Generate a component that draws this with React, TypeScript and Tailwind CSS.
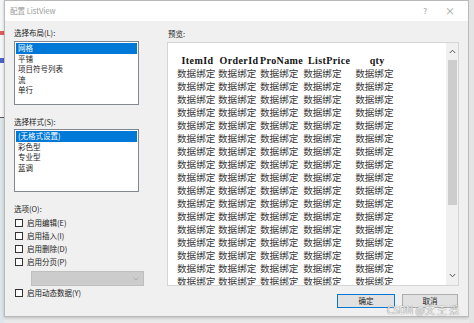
import React from 'react';

const ui = { fontFamily: '"Noto Sans CJK SC", "Liberation Sans", sans-serif' };
const head = { fontFamily: '"Liberation Serif", "Noto Sans CJK SC", serif' };

const layouts = ['网格', '平铺', '项目符号列表', '流', '单行'];
const styles = ['(无格式设置)', '彩色型', '专业型', '蓝调'];
const options = ['启用编辑(E)', '启用插入(I)', '启用删除(D)', '启用分页(P)'];
const columns = ['ItemId', 'OrderId', 'ProName', 'ListPrice', 'qty'];
const colWidths = ['w-[41px]', 'w-[42px]', 'w-[42px]', 'w-[52px]', 'w-[44px]'];

function ListBox({ items, height }: { items: string[]; height: string }) {
  return (
    <div className={`w-[125px] ${height} bg-white border border-[#828790] p-px`}>
      {items.map((item, i) => (
        <div
          key={item}
          className={`h-[10.5px] leading-[10.5px] pl-[2px] text-[7.5px] ${
            i === 0 ? 'bg-[#0078d7] text-white' : 'text-[#1a1a1a]'
          }`}
        >
          {item}
        </div>
      ))}
    </div>
  );
}

function CheckRow({ label }: { label: string }) {
  return (
    <div className="h-[13px] flex items-center gap-[4px] pl-px">
      <div className="w-[8px] h-[8px] border border-[#333] bg-white" />
      <span className="text-[7.5px] text-[#222]">{label}</span>
    </div>
  );
}

export default function App() {
  const rows = Array.from({ length: 17 });

  return (
    <div className="w-[474px] h-[323px] bg-[#e9e9e9] flex overflow-hidden relative" style={ui}>
      {/* background window peeking out on the left */}
      <div className="w-[4px] h-full bg-[#f4f6f8] flex flex-col">
        <div className="h-[31px]" />
        <div className="h-[4px] bg-[#e05a5a]" />
        <div className="h-[23px]" />
        <div className="h-[5px] bg-[#4a63c8]" />
        <div className="h-[54px]" />
        <div className="h-px bg-[#555]" />
        <div className="flex-1 bg-[#dde6ea]" />
      </div>

      <div className="w-[465px] h-[317px] flex flex-col border border-[#b9b9b9] shadow-[0_1px_3px_rgba(0,0,0,0.2)]">
        {/* title bar */}
        <div className="h-[20px] bg-white flex items-center pl-[5px] pr-[13px] text-[#9a9a9a]">
          <span className="text-[7.5px]">配置 ListView</span>
          <span className="ml-auto text-[8px]">?</span>
          <span className="ml-[18px] text-[10px] leading-none">×</span>
        </div>

        <div className="flex-1 bg-[#f0f0f0] flex">
          {/* left column */}
          <div className="w-[162px] pl-[9px] flex flex-col">
            <div className="mt-[7px] h-[10px] leading-[10px] text-[7.5px] text-[#222]">选择布局(L):</div>
            <div className="mt-[3px]">
              <ListBox items={layouts} height="h-[64px]" />
            </div>
            <div className="mt-[12px] h-[10px] leading-[10px] text-[7.5px] text-[#222]">选择样式(S):</div>
            <div className="mt-[2px]">
              <ListBox items={styles} height="h-[63px]" />
            </div>
            <div className="mt-[12px] h-[10px] leading-[10px] text-[7.5px] text-[#222]">选项(O):</div>
            <div className="mt-[2px]">
              {options.map((o) => (
                <CheckRow key={o} label={o} />
              ))}
            </div>
            <div className="mt-[3px] ml-[17px] w-[113px] h-[15px] bg-[#cccccc] border border-[#bfbfbf] flex items-center justify-end pr-[4px]">
              <svg width="6" height="4" viewBox="0 0 6 4">
                <path d="M0.5 0.5 L3 3 L5.5 0.5" fill="none" stroke="#a5a5a5" strokeWidth="0.8" />
              </svg>
            </div>
            <CheckRow label="启用动态数据(Y)" />
          </div>

          {/* right column */}
          <div className="w-[292px] flex flex-col">
            <div className="mt-[8px] pl-px h-[10px] leading-[10px] text-[7.5px] text-[#222]">预览:</div>
            <div className="mt-[3px] h-[244px] bg-white border border-[#d5d5d5] flex overflow-hidden">
              <div className="flex-1 pt-[11px] pl-[9px] overflow-hidden">
                <table className="border-collapse">
                  <thead>
                    <tr className="h-[13px]">
                      {columns.map((c, i) => (
                        <th
                          key={c}
                          className={`${colWidths[i]} p-0 text-center text-[10px] leading-[13px] font-bold text-[#111] whitespace-nowrap tracking-[0.4px]`}
                          style={head}
                        >
                          {c}
                        </th>
                      ))}
                    </tr>
                  </thead>
                  <tbody>
                    {rows.map((_, r) => (
                      <tr key={r} className="h-[13px]">
                        {columns.map((c, i) => (
                          <td
                            key={c}
                            className={`${colWidths[i]} p-0 text-left text-[9.6px] leading-[13px] text-[#3a3a3a] whitespace-nowrap`}
                          >
                            数据绑定
                          </td>
                        ))}
                      </tr>
                    ))}
                  </tbody>
                </table>
              </div>
              {/* scrollbar */}
              <div className="w-[12px] bg-[#f0f0f0] flex flex-col items-center">
                <div className="h-[17px] flex items-center justify-center">
                  <svg width="7" height="5" viewBox="0 0 7 5">
                    <path d="M0.8 4 L3.5 1.2 L6.2 4" fill="none" stroke="#555" strokeWidth="1" />
                  </svg>
                </div>
                <div className="w-[9px] h-[145px] bg-[#cdcdcd]" />
                <div className="flex-1" />
                <div className="h-[20px] flex items-center justify-center">
                  <svg width="7" height="5" viewBox="0 0 7 5">
                    <path d="M0.8 1 L3.5 3.8 L6.2 1" fill="none" stroke="#555" strokeWidth="1" />
                  </svg>
                </div>
              </div>
            </div>
            <div className="mt-[8px] flex justify-end gap-[7px] pr-[1px]">
              <button className="w-[58px] h-[14px] bg-[#e1e1e1] border border-[#0078d7] text-[7.5px] text-[#222] leading-none">
                确定
              </button>
              <button className="w-[56px] h-[14px] bg-[#e1e1e1] border border-[#adadad] text-[7.5px] text-[#222] leading-none">
                取消
              </button>
            </div>
          </div>
        </div>
      </div>

      <div className="flex-1 bg-[#e4e4e4]" />

      {/* watermark */}
      <div
        className="absolute left-[387px] top-[305px] text-[10px] leading-none text-[#f4f4f4] whitespace-nowrap"
        style={{ textShadow: '0 0 1px #888, 0 0 1px #888' }}
      >
        CSDN @文 王 采
      </div>
    </div>
  );
}
